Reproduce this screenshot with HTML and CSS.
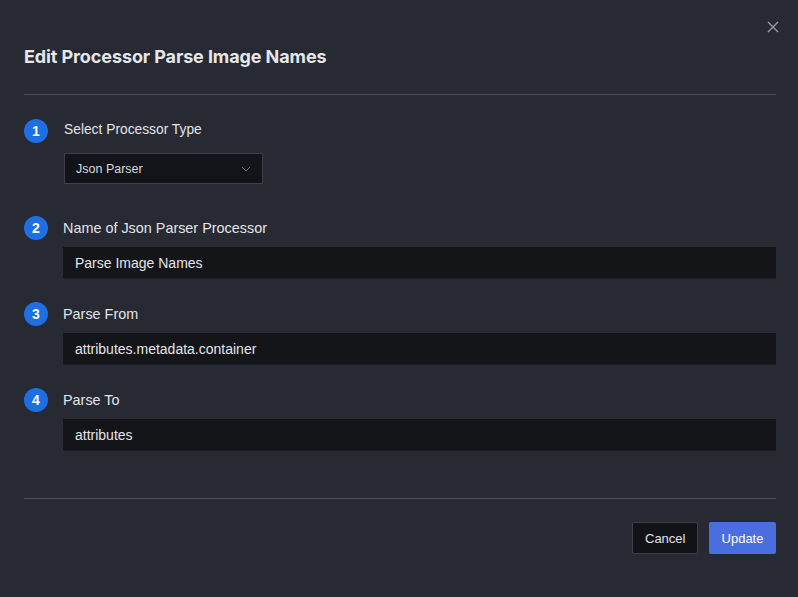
FILE: index.html
```html
<!DOCTYPE html>
<html>
<head>
<meta charset="utf-8">
<link rel="stylesheet" href="styles.css">
</head>
<body>
<div class="modal">
  <button class="close" aria-label="Close">
    <svg width="12" height="12" viewBox="0 0 12 12"><path d="M1 1L11 11M11 1L1 11" stroke="#9a9ca3" stroke-width="1.4" fill="none"/></svg>
  </button>
  <h1 class="title">Edit Processor Parse Image Names</h1>
  <div class="divider"></div>
  <div class="steps">
    <div class="step step-select">
      <div class="step-head"><span class="num">1</span><span class="label">Select Processor Type</span></div>
      <div class="select">
        <span>Json Parser</span>
        <svg width="10" height="6" viewBox="0 0 10 6"><path d="M1 1L5 5L9 1" stroke="#6b6e75" stroke-width="1" fill="none"/></svg>
      </div>
    </div>
    <div class="step">
      <div class="step-head"><span class="num">2</span><span class="label">Name of Json Parser Processor</span></div>
      <div class="input">Parse Image Names</div>
    </div>
    <div class="step">
      <div class="step-head"><span class="num">3</span><span class="label">Parse From</span></div>
      <div class="input">attributes.metadata.container</div>
    </div>
    <div class="step">
      <div class="step-head"><span class="num">4</span><span class="label">Parse To</span></div>
      <div class="input">attributes</div>
    </div>
  </div>
  <div class="divider bottom"></div>
  <div class="actions">
    <button class="btn cancel">Cancel</button>
    <button class="btn update">Update</button>
  </div>
</div>
</body>
</html>
```
FILE: styles.css
```css
html, body {
  margin: 0;
  padding: 0;
  background: #272a33;
  width: 798px;
  height: 597px;
  overflow: hidden;
}
.modal {
  position: relative;
  padding: 0 22px 0 24px;
  font-family: "Liberation Sans", Arial, sans-serif;
  color: #e3e4e7;
}
.close {
  position: absolute;
  top: 21px;
  right: 19px;
  background: none;
  border: 0;
  padding: 0;
  width: 12px;
  height: 12px;
  display: flex;
}
.title {
  margin: 0;
  padding-top: 45px;
  font-family: Inter, "Liberation Sans", sans-serif;
  font-weight: 700;
  font-size: 18px;
  line-height: 24px;
  color: #e6e7ea;
  letter-spacing: -0.1px;
}
.divider {
  height: 1px;
  background: #4a4d56;
  margin-top: 25px;
}
.steps {
  display: flex;
  flex-direction: column;
  padding-top: 24px;
}
.step {
  display: flex;
  flex-direction: column;
  margin-bottom: 23px;
}
.step-select { margin-bottom: 32px; }
.step-head {
  display: flex;
  align-items: center;
  height: 24px;
}
.num {
  width: 24px;
  height: 24px;
  border-radius: 50%;
  background: #1e6ee4;
  color: #fff;
  font-size: 14px;
  font-weight: 700;
  display: flex;
  align-items: center;
  justify-content: center;
  margin-right: 15px;
}
.step-select .num { margin-right: 16px; }
.label {
  font-size: 14.4px;
  color: #e3e4e7;
}
.step-select .label { font-size: 13.8px; margin-top: -4px; }
.select {
  margin: 10px 0 0 40px;
  width: 199px;
  height: 31px;
  box-sizing: border-box;
  border: 1px solid #3d4048;
  background: #121419;
  display: flex;
  align-items: center;
  justify-content: space-between;
  padding: 0 11px 0 11px;
  font-size: 12.5px;
  color: #d8d9dc;
}
.input {
  margin: 7px 0 0 39px;
  height: 31px;
  background: #131519;
  display: flex;
  align-items: center;
  padding-left: 12px;
  font-size: 14px;
  color: #e3e4e7;
  border-bottom: 1px solid #1c1f25;
}
.divider.bottom { margin-top: 24px; }
.actions {
  display: flex;
  justify-content: flex-end;
  gap: 11px;
  margin-top: 23px;
}
.btn {
  height: 32px;
  font-family: "Liberation Sans", Arial, sans-serif;
  font-size: 13px;
  border-radius: 2px;
  padding: 0 12px;
}
.cancel {
  background: #111317;
  border: 1px solid #3d4048;
  color: #e3e4e7;
  width: 66px;
}
.update {
  background: #4a6ee0;
  border: 0;
  color: #fff;
  width: 67px;
}
```
